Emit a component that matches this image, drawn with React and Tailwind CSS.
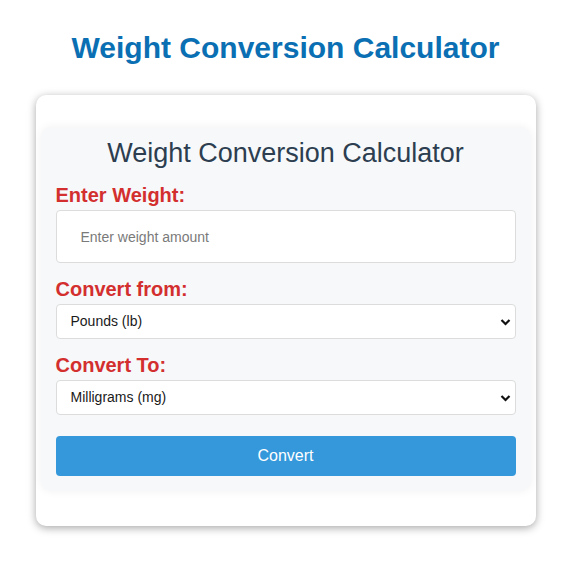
import { useState } from 'react';

const UNITS = [
  'Kilograms (kg)',
  'Grams (g)',
  'Milligrams (mg)',
  'Pounds (lb)',
  'Ounces (oz)',
];

function Chevron() {
  return (
    <svg
      className="pointer-events-none absolute right-[5px] top-1/2 -translate-y-1/2"
      width="11"
      height="8"
      viewBox="0 0 11 8"
      fill="none"
    >
      <path d="M1.5 2 L5.5 6 L9.5 2" stroke="#111" strokeWidth="2.2" />
    </svg>
  );
}

function UnitSelect({ value, onChange }) {
  return (
    <div className="relative mt-[3px]">
      <select
        value={value}
        onChange={(e) => onChange(e.target.value)}
        className="block h-[35px] w-full appearance-none rounded-[4px] border border-[#dcdcdc] bg-white pl-[14px] text-[14px] text-[#1a1a1a] outline-none"
      >
        {UNITS.map((unit) => (
          <option key={unit} value={unit}>
            {unit}
          </option>
        ))}
      </select>
      <Chevron />
    </div>
  );
}

export default function App() {
  const [weight, setWeight] = useState('');
  const [from, setFrom] = useState('Pounds (lb)');
  const [to, setTo] = useState('Milligrams (mg)');

  return (
    <div className="min-h-[577px] bg-white font-['Liberation_Sans',Arial,sans-serif]">
      <h1 className="pt-[31px] text-center text-[30px] font-bold leading-[34px] text-[#0b6fb3]">
        Weight Conversion Calculator
      </h1>

      <div className="mx-auto mt-[30px] w-[500px] rounded-[10px] bg-white px-[5px] pb-[35px] pt-[32px] shadow-[0_2px_8px_rgba(0,0,0,0.35)]">
        <div className="rounded-[10px] bg-[#f7f8fa] px-[15px] pb-[15px] pt-[11px] shadow-[0_0_10px_rgba(0,0,0,0.06)]">
          <h2 className="text-center text-[27px] leading-[31px] text-[#2c3e50]">
            Weight Conversion Calculator
          </h2>

          <label className="mt-[15px] block text-[20px] font-bold leading-[23px] text-[#d32f2f]">
            Enter Weight:
          </label>
          <input
            type="number"
            value={weight}
            onChange={(e) => setWeight(e.target.value)}
            placeholder="Enter weight amount"
            className="mt-[3px] block h-[53px] w-full rounded-[4px] border border-[#dcdcdc] bg-white pl-[24px] text-[14px] text-[#1a1a1a] outline-none placeholder:text-[#7a7a7a]"
          />

          <label className="mt-[15px] block text-[20px] font-bold leading-[23px] text-[#d32f2f]">
            Convert from:
          </label>
          <UnitSelect value={from} onChange={setFrom} />

          <label className="mt-[15px] block text-[20px] font-bold leading-[23px] text-[#d32f2f]">
            Convert To:
          </label>
          <UnitSelect value={to} onChange={setTo} />

          <button
            type="button"
            className="mt-[21px] block h-[40px] w-full rounded-[4px] bg-[#3498db] text-[16px] text-white"
          >
            Convert
          </button>
        </div>
      </div>
    </div>
  );
}
